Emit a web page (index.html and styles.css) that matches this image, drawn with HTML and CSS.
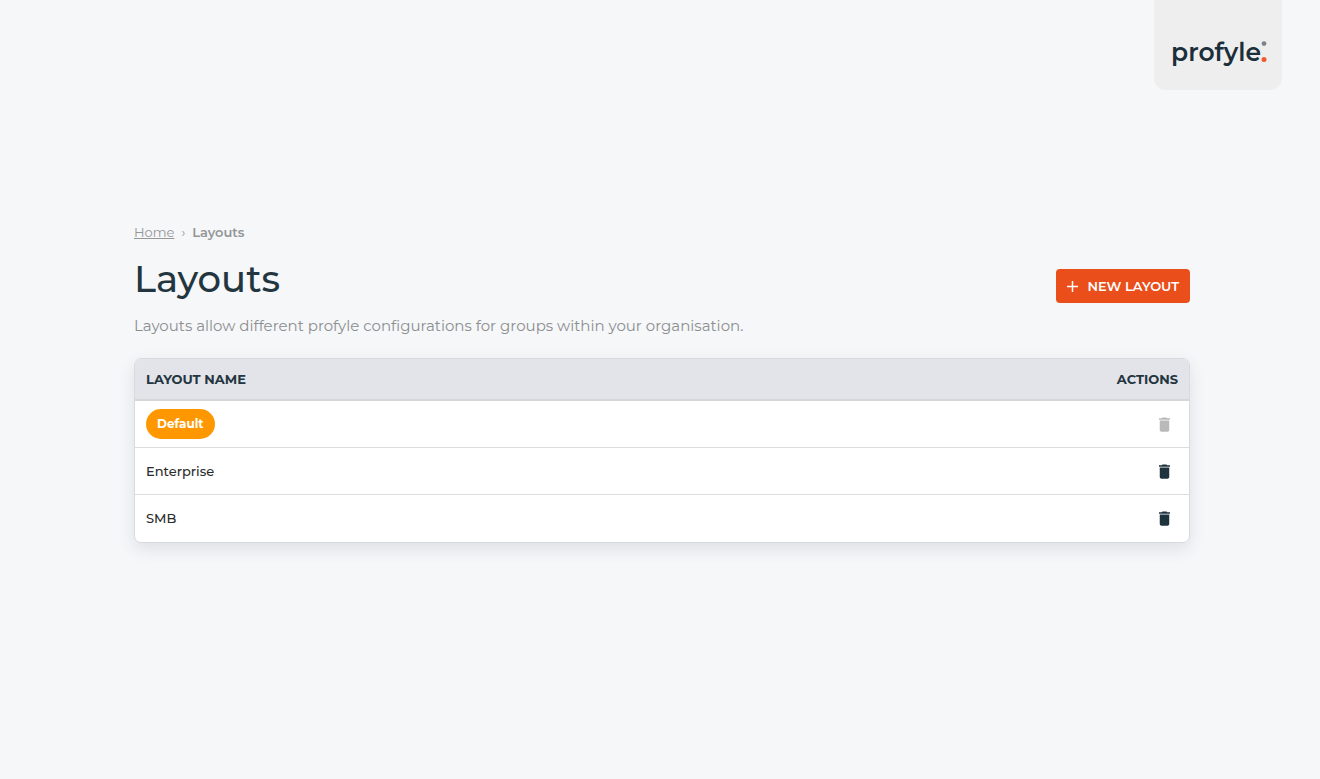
FILE: index.html
```html
<!DOCTYPE html>
<html lang="en">
<head>
  <meta charset="UTF-8">
  <meta name="viewport" content="width=device-width, initial-scale=1">
  <title>Layouts - profyle</title>
  <link rel="stylesheet" href="styles.css">
</head>
<body>
  <header class="site-header">
    <div class="logo">
      <span class="logo-text">profyle</span>
      <svg class="logo-dots" width="6" height="24" viewBox="0 0 6 24" aria-hidden="true">
        <circle cx="3" cy="2.6" r="2.4" fill="#7d8386"/>
        <circle cx="3" cy="18.5" r="2.5" fill="#f15a2f"/>
      </svg>
    </div>
  </header>

  <main class="content">
    <nav class="breadcrumb" aria-label="Breadcrumb">
      <a href="#">Home</a>
      <span class="separator">›</span>
      <span class="current">Layouts</span>
    </nav>

    <div class="title-row">
      <h1>Layouts</h1>
      <button type="button" class="btn-new">
        <svg width="11" height="11" viewBox="0 0 11 11" aria-hidden="true">
          <path d="M5.5 0v11M0 5.5h11" stroke="currentColor" stroke-width="1.5"/>
        </svg>
        NEW LAYOUT
      </button>
    </div>

    <p class="intro">Layouts allow different profyle configurations for groups within your organisation.</p>

    <div class="table-card">
      <table>
        <thead>
          <tr>
            <th>LAYOUT NAME</th>
            <th class="actions">ACTIONS</th>
          </tr>
        </thead>
        <tbody>
          <tr>
            <td><span class="badge">Default</span></td>
            <td class="actions">
              <button type="button" class="btn-delete" aria-label="Delete Default" disabled>
                <svg viewBox="0 0 24 24" aria-hidden="true"><path d="M6 19c0 1.1.9 2 2 2h8c1.1 0 2-.9 2-2V7H6v12zM19 4h-3.5l-1-1h-5l-1 1H5v2h14V4z"/></svg>
              </button>
            </td>
          </tr>
          <tr>
            <td>Enterprise</td>
            <td class="actions">
              <button type="button" class="btn-delete" aria-label="Delete Enterprise">
                <svg viewBox="0 0 24 24" aria-hidden="true"><path d="M6 19c0 1.1.9 2 2 2h8c1.1 0 2-.9 2-2V7H6v12zM19 4h-3.5l-1-1h-5l-1 1H5v2h14V4z"/></svg>
              </button>
            </td>
          </tr>
          <tr>
            <td>SMB</td>
            <td class="actions">
              <button type="button" class="btn-delete" aria-label="Delete SMB">
                <svg viewBox="0 0 24 24" aria-hidden="true"><path d="M6 19c0 1.1.9 2 2 2h8c1.1 0 2-.9 2-2V7H6v12zM19 4h-3.5l-1-1h-5l-1 1H5v2h14V4z"/></svg>
              </button>
            </td>
          </tr>
        </tbody>
      </table>
    </div>
  </main>
</body>
</html>
```

FILE: styles.css
```css
* {
  box-sizing: border-box;
}

body {
  margin: 0;
  background: #f5f7f9;
  color: #2b2b2b;
  font-family: Montserrat, Inter, sans-serif;
  font-size: 13px;
}

.site-header {
  display: flex;
  justify-content: flex-end;
  padding-right: 38px;
}

.logo {
  display: flex;
  align-items: flex-end;
  height: 90px;
  padding: 0 15px 25px 17px;
  background: #eeeeee;
  border-radius: 0 0 12px 12px;
}

.logo-text {
  color: #1b2f3a;
  font-size: 25px;
  font-weight: 600;
  line-height: 26px;
}

.content {
  margin: 133px 130px 40px 134px;
}

.breadcrumb {
  display: flex;
  gap: 7px;
  color: #949698;
  line-height: 18px;
}

.breadcrumb a {
  color: inherit;
}

.breadcrumb .current {
  font-weight: 600;
}

.title-row {
  display: flex;
  justify-content: space-between;
  align-items: flex-end;
  margin-top: 14px;
}

h1 {
  margin: 0;
  color: #233640;
  font-size: 37px;
  font-weight: 500;
  line-height: 48px;
}

.btn-new {
  display: flex;
  align-items: center;
  gap: 10px;
  height: 34px;
  padding: 0 11px;
  border: 0;
  border-radius: 4px;
  background: #e94e1b;
  color: #fff;
  font: inherit;
  font-weight: 600;
  cursor: pointer;
}

.intro {
  margin: 12px 0 21px;
  color: #8c8e90;
  font-size: 15px;
  line-height: 22px;
}

.table-card {
  overflow: hidden;
  border: 1px solid #d9dadd;
  border-radius: 7px;
  background: #fff;
  box-shadow: 0 6px 16px rgba(60, 64, 90, 0.12);
}

table {
  width: 100%;
  border-collapse: collapse;
}

th {
  height: 41px;
  padding: 0 11px;
  background: #e3e4e9;
  border-bottom: 2px solid #d5d6da;
  color: #233640;
  font-weight: 700;
  text-align: left;
}

td {
  height: 47px;
  padding: 8px 11px;
  font-weight: 500;
}

tbody tr + tr td {
  border-top: 1px solid #dcdddf;
}

.actions {
  text-align: right;
}

.badge {
  display: inline-block;
  padding: 0 11px;
  border-radius: 15px;
  background: #ff9800;
  color: #fff;
  font-size: 12px;
  font-weight: 700;
  line-height: 30px;
}

.btn-delete {
  padding: 0;
  margin-right: 4px;
  border: 0;
  background: none;
  color: #1f333e;
  vertical-align: middle;
  cursor: pointer;
}

.btn-delete:disabled {
  color: #b9b9b9;
  cursor: default;
}

.btn-delete svg {
  display: block;
  width: 19px;
  height: 19px;
  fill: currentColor;
}
```
